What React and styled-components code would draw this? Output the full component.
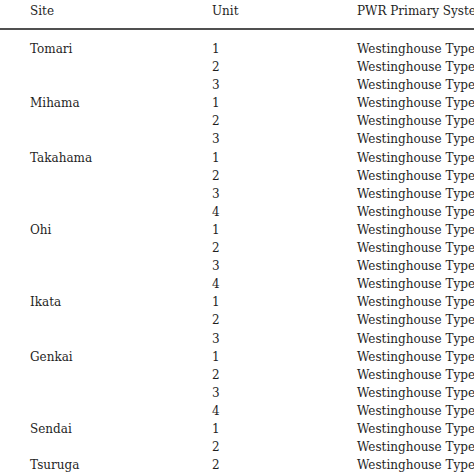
import React from "react";
import styled, { createGlobalStyle } from "styled-components";

const GlobalStyle = createGlobalStyle`
  html, body {
    margin: 0;
    padding: 0;
    background: #ffffff;
    overflow: hidden;
  }
`;

const StyledTable = styled.div`
  width: 474px;
  height: 474px;
  overflow: hidden;
  font-family: "DejaVu Serif", "Liberation Serif", serif;
  font-size: 12px;
  color: #1f1f1f;
  background: #ffffff;
`;

const StyledHead = styled.div`
  display: grid;
  grid-template-columns: 182px 145px 1fr;
  padding: 4px 0 0 30px;
  height: 30px;
  box-sizing: border-box;
  border-bottom: 2px solid #505050;
`;

const StyledBody = styled.div`
  padding-top: 10px;
`;

const StyledRow = styled.div`
  display: grid;
  grid-template-columns: 182px 145px 1fr;
  padding-left: 30px;
  height: 18.1px;
  line-height: 18px;
`;

const StyledCell = styled.div`
  white-space: nowrap;
  overflow: visible;
`;

const sites = [
  ["Tomari", 3],
  ["Mihama", 3],
  ["Takahama", 4],
  ["Ohi", 4],
  ["Ikata", 3],
  ["Genkai", 4],
  ["Sendai", 2],
  ["Tsuruga", 1],
];

const rows = [];
sites.forEach(([name, count]) => {
  for (let i = 1; i <= count; i++) {
    rows.push({
      site: i === 1 ? name : "",
      unit: name === "Tsuruga" ? 2 : i,
    });
  }
});

const App = () => {
  return (
    <>
      <GlobalStyle />
      <StyledTable>
        <StyledHead>
          <StyledCell>Site</StyledCell>
          <StyledCell>Unit</StyledCell>
          <StyledCell>PWR Primary System</StyledCell>
        </StyledHead>
        <StyledBody>
          {rows.map((row, idx) => (
            <StyledRow key={idx}>
              <StyledCell>{row.site}</StyledCell>
              <StyledCell>{row.unit}</StyledCell>
              <StyledCell>Westinghouse Type</StyledCell>
            </StyledRow>
          ))}
        </StyledBody>
      </StyledTable>
    </>
  );
};

export default App;
